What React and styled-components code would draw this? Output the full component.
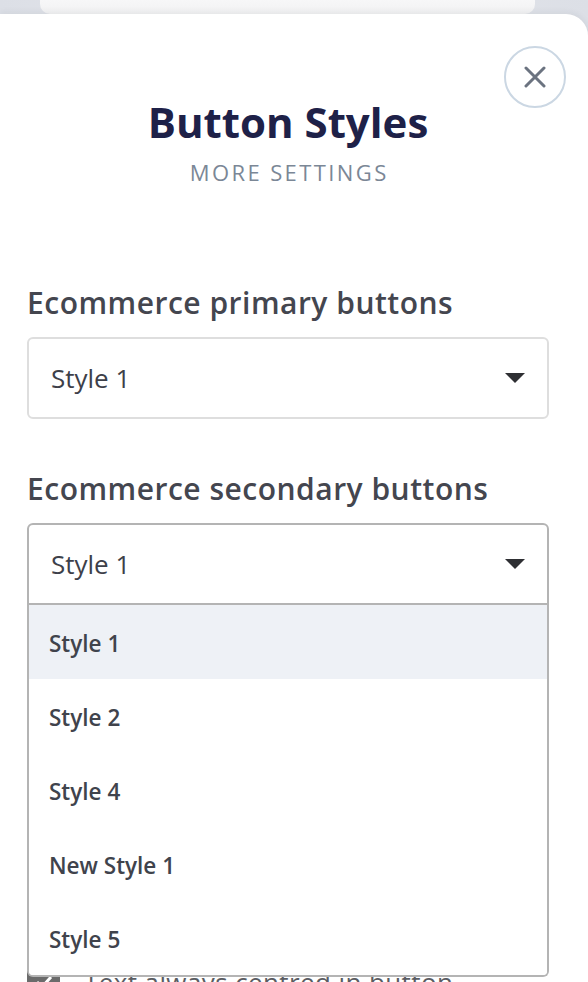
import React from "react";
import styled, { createGlobalStyle } from "styled-components";

const Global = createGlobalStyle`
  html, body { margin: 0; padding: 0; }
  body {
    background: #dfe2e8;
    font-family: "Open Sans", "Noto Sans", sans-serif;
    -webkit-font-smoothing: antialiased;
  }
`;

const Backdrop = styled.div`
  height: 982px;
  overflow: hidden;
  display: flex;
  flex-direction: column;
  background: linear-gradient(90deg, #dcdfe6 0%, #e6e8ec 50%, #dcdfe6 100%);
`;

const BackCard = styled.div`
  height: 14px;
  margin-left: 40px;
  width: 495px;
  flex: none;
  background: linear-gradient(180deg, #f7f7f8 0%, #f1f1f2 100%);
  border-radius: 0 0 10px 10px;
`;

const Sheet = styled.div`
  flex: 1;
  background: #ffffff;
  border-top-right-radius: 22px;
  box-shadow: 0 -2px 6px rgba(40, 50, 70, 0.06);
  padding: 0 39px 0 27px;
  display: flex;
  flex-direction: column;
  position: relative;
`;

const Header = styled.header`
  display: flex;
  flex-direction: column;
  align-items: center;
  padding-top: 83px;
`;

const Title = styled.h1`
  margin: 0;
  font-size: 42px;
  line-height: 50px;
  font-weight: 700;
  color: #1e2148;
`;

const Subtitle = styled.div`
  margin-top: 12px;
  font-size: 22px;
  line-height: 26px;
  letter-spacing: 2.4px;
  margin-right: -2.4px;
  color: #7b8796;
  text-transform: uppercase;
`;

const CloseButton = styled.button`
  position: absolute;
  top: 32px;
  right: 22px;
  width: 62px;
  height: 62px;
  border-radius: 50%;
  border: 2px solid #cbd7e3;
  background: #fff;
  display: flex;
  align-items: center;
  justify-content: center;
  padding: 0;
  cursor: pointer;
`;

const Field = styled.div`
  display: flex;
  flex-direction: column;
  margin-top: ${(p) => p.$gap}px;
`;

const Label = styled.label`
  font-size: 30px;
  line-height: 34px;
  font-weight: 600;
  letter-spacing: 0.5px;
  color: #44464f;
  margin-bottom: 17px;
  white-space: nowrap;
`;

const SelectWrap = styled.div`
  position: relative;
`;

const SelectBox = styled.div`
  height: 82px;
  box-sizing: border-box;
  border: 2px solid ${(p) => (p.$open ? "#b4b4b4" : "#dedede")};
  border-radius: ${(p) => (p.$open ? "6px 6px 0 0" : "6px")};
  display: flex;
  align-items: center;
  justify-content: space-between;
  padding: 0 22px 0 22px;
  background: #fff;
  font-size: 26px;
  color: #3d4049;
`;

const Caret = styled.span`
  width: 0;
  height: 0;
  border-left: 10px solid transparent;
  border-right: 10px solid transparent;
  border-top: 10px solid #2e2f33;
`;

const Menu = styled.ul`
  position: absolute;
  top: 100%;
  left: 0;
  right: 0;
  margin: 0;
  padding: 0;
  list-style: none;
  background: #fff;
  border: 2px solid #b4b4b4;
  border-top: none;
  border-radius: 0 0 6px 6px;
  overflow: hidden;
  z-index: 2;
`;

const Option = styled.li`
  height: 74px;
  display: flex;
  align-items: center;
  padding-left: 20px;
  padding-top: 2px;
  box-sizing: border-box;
  font-size: 22.5px;
  font-weight: 600;
  color: #40434c;
  background: ${(p) => (p.$active ? "#eef1f6" : "#fff")};
`;

const CheckRow = styled.div`
  display: flex;
  align-items: center;
  gap: 24px;
  margin-top: 360px;
`;

const CheckBox = styled.span`
  width: 33px;
  height: 33px;
  border-radius: 3px;
  background: #6b6b6b;
  display: flex;
  align-items: center;
  justify-content: center;
  flex: none;
`;

const CheckText = styled.span`
  font-size: 26px;
  line-height: 30px;
  color: #5a5c62;
  letter-spacing: 0.4px;
`;

const options = ["Style 1", "Style 2", "Style 4", "New Style 1", "Style 5"];

export default function App() {
  return (
    <>
      <Global />
      <Backdrop>
        <BackCard />
        <Sheet>
          <CloseButton aria-label="Close">
            <svg width="22" height="22" viewBox="0 0 22 22">
              <path d="M2 2 L20 20 M20 2 L2 20" stroke="#6b7380" strokeWidth="3" strokeLinecap="round" />
            </svg>
          </CloseButton>
          <Header>
            <Title>Button Styles</Title>
            <Subtitle>More settings</Subtitle>
          </Header>

          <Field $gap={101}>
            <Label>Ecommerce primary buttons</Label>
            <SelectWrap>
              <SelectBox>
                <span>Style 1</span>
                <Caret />
              </SelectBox>
            </SelectWrap>
          </Field>

          <Field $gap={53}>
            <Label>Ecommerce secondary buttons</Label>
            <SelectWrap>
              <SelectBox $open>
                <span>Style 1</span>
                <Caret />
              </SelectBox>
              <Menu>
                {options.map((o, i) => (
                  <Option key={o} $active={i === 0}>{o}</Option>
                ))}
              </Menu>
            </SelectWrap>
            <CheckRow>
              <CheckBox>
                <svg width="22" height="22" viewBox="0 0 22 22">
                  <path d="M4 11 L9 16 L18 6" stroke="#fff" strokeWidth="3" fill="none" />
                </svg>
              </CheckBox>
              <CheckText>Text always centred in button</CheckText>
            </CheckRow>
          </Field>
        </Sheet>
      </Backdrop>
    </>
  );
}
